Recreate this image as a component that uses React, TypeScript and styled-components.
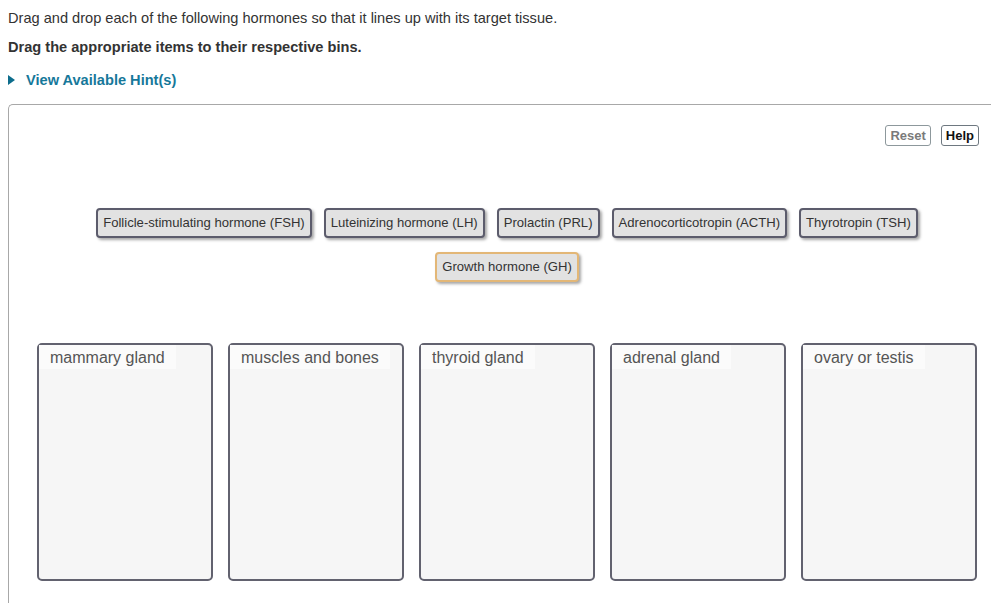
import React from "react";
import styled, { createGlobalStyle } from "styled-components";

const GlobalStyle = createGlobalStyle`
  html, body {
    overflow: hidden;
  }
  body {
    margin: 8px;
    background: #ffffff;
    font-family: "Liberation Sans", Arial, sans-serif;
    color: #333333;
  }
`;

const Page = styled.div`
  display: flex;
  flex-direction: column;
  width: 998px;
  height: 595px;
  overflow: hidden;
`;

const Intro = styled.p`
  margin: 0;
  font-size: 14.6px;
  line-height: 20px;
`;

const Instruction = styled(Intro)`
  margin-top: 9px;
  font-weight: bold;
`;

const HintToggle = styled.div`
  display: flex;
  align-items: center;
  gap: 11px;
  margin-top: 13px;
  font-size: 14.6px;
  line-height: 20px;
  font-weight: bold;
  color: #16789a;
`;

const Caret = styled.span`
  width: 0;
  height: 0;
  border-top: 5px solid transparent;
  border-bottom: 5px solid transparent;
  border-left: 7px solid #0d6d8c;
`;

const Board = styled.div`
  margin-top: 14px;
  border: 1px solid #a8a8a8;
  border-right: none;
  border-bottom: none;
  border-radius: 5px 0 0 0;
  padding: 20px 0 0 28px;
  flex: 1;
  display: flex;
  flex-direction: column;
`;

const Toolbar = styled.div`
  display: flex;
  justify-content: flex-end;
  gap: 10px;
  padding-right: 27px;
`;

const ToolButton = styled.button<{ $muted?: boolean }>`
  font-family: "Liberation Sans", Arial, sans-serif;
  font-size: 13px;
  font-weight: bold;
  line-height: 15px;
  padding: 2px 4px;
  background: #ffffff;
  border: 1px solid ${(p) => (p.$muted ? "#8d989c" : "#6e7880")};
  border-radius: 3px;
  color: ${(p) => (p.$muted ? "#7a7a7a" : "#111111")};
`;

const ChipArea = styled.div`
  display: flex;
  flex-wrap: wrap;
  justify-content: center;
  gap: 14px 12px;
  width: 940px;
  margin-top: 62px;
`;

const Chip = styled.div<{ $selected?: boolean }>`
  font-size: 13.1px;
  line-height: 15px;
  padding: 5px 5px 6px 5px;
  background: #e2e2e2;
  border: 2px solid ${(p) => (p.$selected ? "#e3b777" : "#5c5c6c")};
  border-radius: 4px;
  color: #333333;
  box-shadow: 2px 2px 3px rgba(0, 0, 0, 0.35);
  white-space: nowrap;
`;

const BinRow = styled.div`
  display: grid;
  grid-template-columns: repeat(5, 176px);
  gap: 15px;
  margin-top: 61px;
`;

const Bin = styled.div`
  height: 238px;
  box-sizing: border-box;
  background: #f6f6f6;
  border: 2px solid #62626f;
  border-radius: 5px;
  display: flex;
  flex-direction: column;
  align-items: flex-start;
`;

const BinLabel = styled.div`
  background: #fbfbfb;
  color: #555555;
  font-size: 16px;
  line-height: 20px;
  padding: 3px 11px 1px 11px;
`;

const hormones = [
  "Follicle-stimulating hormone (FSH)",
  "Luteinizing hormone (LH)",
  "Prolactin (PRL)",
  "Adrenocorticotropin (ACTH)",
  "Thyrotropin (TSH)",
  "Growth hormone (GH)",
];

const bins = [
  "mammary gland",
  "muscles and bones",
  "thyroid gland",
  "adrenal gland",
  "ovary or testis",
];

export default function App() {
  return (
    <Page>
      <GlobalStyle />
      <Intro>
        Drag and drop each of the following hormones so that it lines up with
        its target tissue.
      </Intro>
      <Instruction>Drag the appropriate items to their respective bins.</Instruction>
      <HintToggle>
        <Caret />
        View Available Hint(s)
      </HintToggle>
      <Board>
        <Toolbar>
          <ToolButton $muted>Reset</ToolButton>
          <ToolButton>Help</ToolButton>
        </Toolbar>
        <ChipArea>
          {hormones.map((h) => (
            <Chip key={h} $selected={h.startsWith("Growth")}>
              {h}
            </Chip>
          ))}
        </ChipArea>
        <BinRow>
          {bins.map((b) => (
            <Bin key={b}>
              <BinLabel>{b}</BinLabel>
            </Bin>
          ))}
        </BinRow>
      </Board>
    </Page>
  );
}
